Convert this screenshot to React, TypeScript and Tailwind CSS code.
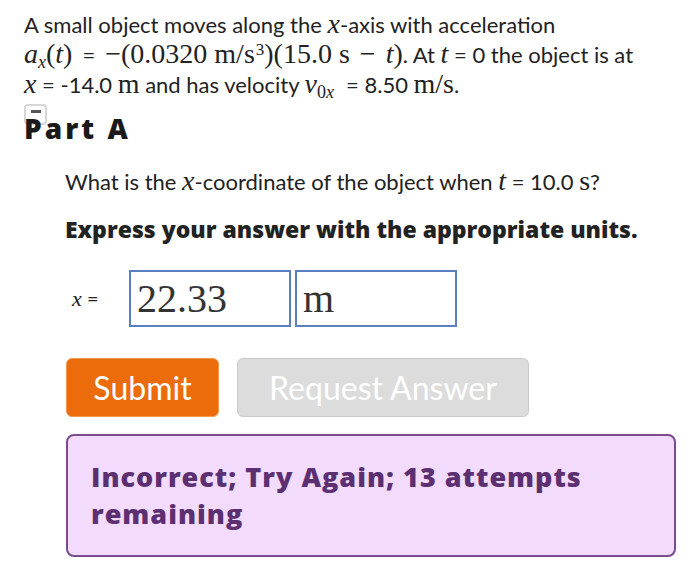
import React from "react";

function M({ children }: { children: React.ReactNode }) {
  return <span className="font-['Liberation_Serif',serif] italic text-[28px] leading-none">{children}</span>;
}
function R({ children }: { children: React.ReactNode }) {
  return <span className="font-['Liberation_Serif',serif] text-[28px] leading-none">{children}</span>;
}

export default function App() {
  return (
    <div className="w-[700px] h-[572px] bg-white text-[#222] font-['Lato',sans-serif] overflow-hidden">
      <div className="pl-[24px] pt-[10px] text-[22px] leading-[30px]">
        <div className="h-[30px] whitespace-nowrap">
          A small object moves along the <M>x</M>-axis with acceleration
        </div>
        <div className="h-[30px] whitespace-nowrap">
          <M>a</M>
          <sub className="font-['Liberation_Serif',serif] italic text-[18px]">x</sub>
          <R>(</R>
          <M>t</M>
          <R>)</R>
          <span className="mx-[10px]">=</span>
          <R>
            −(0.0320<span className="ml-[7px]">m/s</span>
            <sup className="text-[17px] ml-[1px]">3</sup>)(15.0<span className="ml-[7px]">s</span>
            <span className="mx-[10px]">−</span>
          </R>
          <M>t</M>
          <R>)</R>. At <M>t</M> = 0 the object is at
        </div>
        <div className="h-[30px] whitespace-nowrap">
          <M>x</M> = -14.0 <R>m</R> and has velocity <M>v</M>
          <sub className="font-['Liberation_Serif',serif] text-[18px]">
            0<span className="italic">x</span>
          </sub>
          <span className="ml-[12px]">=</span> 8.50 <R>m/s</R>.
        </div>
      </div>
      <div className="relative pl-[24px] mt-[4px] h-[40px]">
        <div className="absolute left-[24px] top-0 w-[23px] h-[21px] rounded-[4px] border-2 border-[#d6d6d6] bg-white">
          <div className="mx-auto mt-[4px] w-[10px] h-[3px] bg-[#555]" />
        </div>
        <div className="relative pt-[9px] text-[28px] font-extrabold leading-[30px] tracking-[3px] text-[#1a1a1a] font-['Open_Sans',sans-serif]">
          Part A
        </div>
      </div>
      <div className="pl-[65px] mt-[23px] text-[22px] leading-[28px] h-[28px] whitespace-nowrap">
        What is the <M>x</M>-coordinate of the object when <M>t</M> = 10.0 <R>s</R>?
      </div>
      <div className="pl-[65px] mt-[20px] text-[23px] leading-[28px] h-[28px] font-extrabold text-[#222] font-['Open_Sans',sans-serif] whitespace-nowrap">
        Express your answer with the appropriate units.
      </div>
      <div className="flex items-center pl-[72px] mt-[27px]">
        <div className="w-[57px] text-[20px]">
          <span className="font-['Liberation_Serif',serif] italic text-[22px]">x</span> =
        </div>
        <div className="flex gap-[4px]">
          <div className="w-[162px] h-[57px] border-2 border-[#5a7fc0] flex items-center pl-[6px] font-['Liberation_Serif',serif] text-[40px] text-[#333]">
            22.33
          </div>
          <div className="w-[162px] h-[57px] border-2 border-[#5a7fc0] flex items-center pl-[6px] font-['Liberation_Serif',serif] text-[40px] text-[#333]">
            m
          </div>
        </div>
      </div>
      <div className="flex gap-[18px] pl-[66px] mt-[31px]">
        <div className="w-[153px] h-[59px] rounded-[6px] bg-[#ec6b0b] border border-[#f39a4f] flex items-center justify-center text-white text-[32px]">
          Submit
        </div>
        <div className="w-[292px] h-[59px] rounded-[6px] bg-[#dcdcdc] border border-[#cacaca] flex items-center justify-center text-white text-[32px]">
          Request Answer
        </div>
      </div>
      <div className="ml-[66px] mt-[17px] w-[610px] h-[123px] rounded-[8px] bg-[#f2dbfc] border-2 border-[#7b4c8d] pl-[23px] pt-[22px] text-[27px] leading-[37px] tracking-[1px] font-extrabold text-[#5b2f70] font-['Open_Sans',sans-serif]">
        Incorrect; Try Again; 13 attempts
        <br />
        remaining
      </div>
    </div>
  );
}
